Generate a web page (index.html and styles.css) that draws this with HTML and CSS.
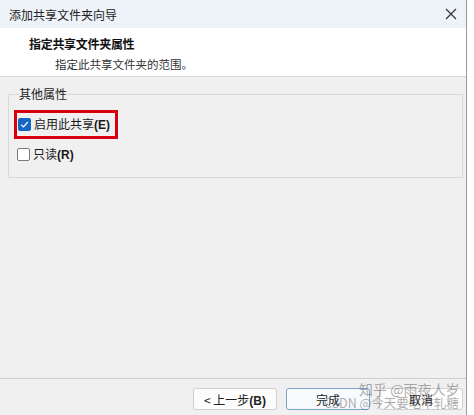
FILE: index.html
```html
<!DOCTYPE html>
<html lang="zh-CN">
<head>
<meta charset="utf-8">
<title>添加共享文件夹向导</title>
<link rel="stylesheet" href="styles.css">
</head>
<body>
<div class="dialog">
  <div class="titlebar">
    <span class="title">添加共享文件夹向导</span>
    <svg class="close" width="12" height="12" viewBox="0 0 12 12"><path d="M1 1L11 11M11 1L1 11" stroke="#333" stroke-width="1.2" fill="none"/></svg>
  </div>
  <div class="header">
    <div class="h-title">指定共享文件夹属性</div>
    <div class="h-sub">指定此共享文件夹的范围。</div>
  </div>
  <div class="body">
    <fieldset class="group">
      <legend class="legend">其他属性</legend>
      <div class="highlight">
        <label class="check">
          <span class="box checked"><svg width="11" height="11" viewBox="0 0 11 11"><path d="M2.2 5.8L4.5 8L8.8 3" stroke="#fff" stroke-width="1.2" fill="none"/></svg></span>
          <span class="label">启用此共享<span class="latin">(E)</span></span>
        </label>
      </div>
      <label class="check plain">
        <span class="box"></span>
        <span class="label">只读<span class="latin">(R)</span></span>
      </label>
    </fieldset>
  </div>
  <div class="footer">
    <button class="btn">&lt; 上一步<span class="latin">(B)</span></button>
    <button class="btn primary">完成</button>
    <button class="btn">取消</button>
    <div class="watermark">
      <div class="wm1">知乎 @雨夜人岁</div>
      <div class="wm2">CSDN @今天要吃牛轧糖</div>
    </div>
  </div>
</div>
</body>
</html>
```
FILE: styles.css
```css
html, body {
  margin: 0;
  padding: 0;
  background: #ffffff;
}
body {
  width: 474px;
  height: 415px;
  overflow: hidden;
  font-family: "Noto Sans CJK SC", "Noto Sans", sans-serif;
  font-size: 12px;
  color: #1a1a1a;
}
.dialog {
  width: 466px;
  height: 415px;
  border-right: 1px solid #9a9a9a;
  display: flex;
  flex-direction: column;
  background: #f0f0f0;
}
.titlebar {
  height: 28px;
  flex: 0 0 28px;
  background: #eef3f9;
  display: flex;
  align-items: center;
  justify-content: space-between;
  padding: 0 9px 0 9px;
}
.title {
  font-size: 12px;
  color: #222;
}
.header {
  background: #ffffff;
  height: 49px;
  flex: 0 0 49px;
  border-bottom: 1px solid #d6d6d6;
  padding-top: 9px;
  box-sizing: border-box;
}
.h-title {
  font-family: "Liberation Serif", "Noto Sans CJK SC", serif;
  font-weight: bold;
  font-size: 12px;
  line-height: 16px;
  padding-left: 29px;
  letter-spacing: -0.3px;
  color: #111;
}
.h-sub {
  font-size: 11.5px;
  line-height: 16px;
  padding-left: 55px;
  margin-top: 3px;
  color: #333;
}
.body {
  flex: 1;
  padding: 10px 0 0 8px;
}
.group {
  margin: 0;
  width: 455px;
  height: 91px;
  box-sizing: border-box;
  border: 1px solid #d9d9d9;
  padding: 0 0 0 5px;
}
.legend {
  padding: 0;
  margin-left: 5px;
  font-size: 12px;
  line-height: 14px;
  color: #222;
}
.highlight {
  width: 97px;
  height: 23px;
  margin-top: 9px;
  border: 3px solid #d7000f;
  display: flex;
  align-items: center;
  padding-left: 1px;
  white-space: nowrap;
}
.check {
  display: flex;
  align-items: center;
  gap: 3px;
  white-space: nowrap;
}
.check.plain {
  margin-top: 6px;
  margin-left: 3px;
}
.box {
  width: 11px;
  height: 11px;
  flex: 0 0 11px;
  border: 1px solid #7a7a7a;
  border-radius: 2px;
  background: #fff;
  display: flex;
  align-items: center;
  justify-content: center;
}
.box.checked {
  border-color: #1466c4;
  background: #1466c4;
}
.label {
  font-size: 12px;
  line-height: 17px;
  color: #1a1a1a;
}
.latin {
  font-family: "Liberation Sans", sans-serif;
  font-weight: bold;
  font-size: 12px;
}
.footer {
  height: 37px;
  flex: 0 0 37px;
  border-top: 1px solid #cfcfcf;
  display: flex;
  gap: 9px;
  padding: 9px 0 0 193px;
  box-sizing: border-box;
  position: relative;
}
.btn {
  width: 84px;
  height: 22px;
  border: 1px solid #d0d0d0;
  border-radius: 3px;
  background: #fdfdfd;
  font-family: "Noto Sans CJK SC", sans-serif;
  font-size: 12px;
  color: #222;
  padding: 0;
}
.btn.primary {
  border-color: #7aa3cf;
  background: #f8fbfe;
}
.watermark {
  position: absolute;
  left: 324px;
  top: 2px;
  color: rgba(90, 90, 90, 0.5);
  pointer-events: none;
  white-space: nowrap;
}
.wm1 {
  font-size: 14px;
  line-height: 16px;
  padding-left: 35px;
}
.wm2 {
  font-size: 12.5px;
  line-height: 15px;
  margin-top: -2px;
}
```
